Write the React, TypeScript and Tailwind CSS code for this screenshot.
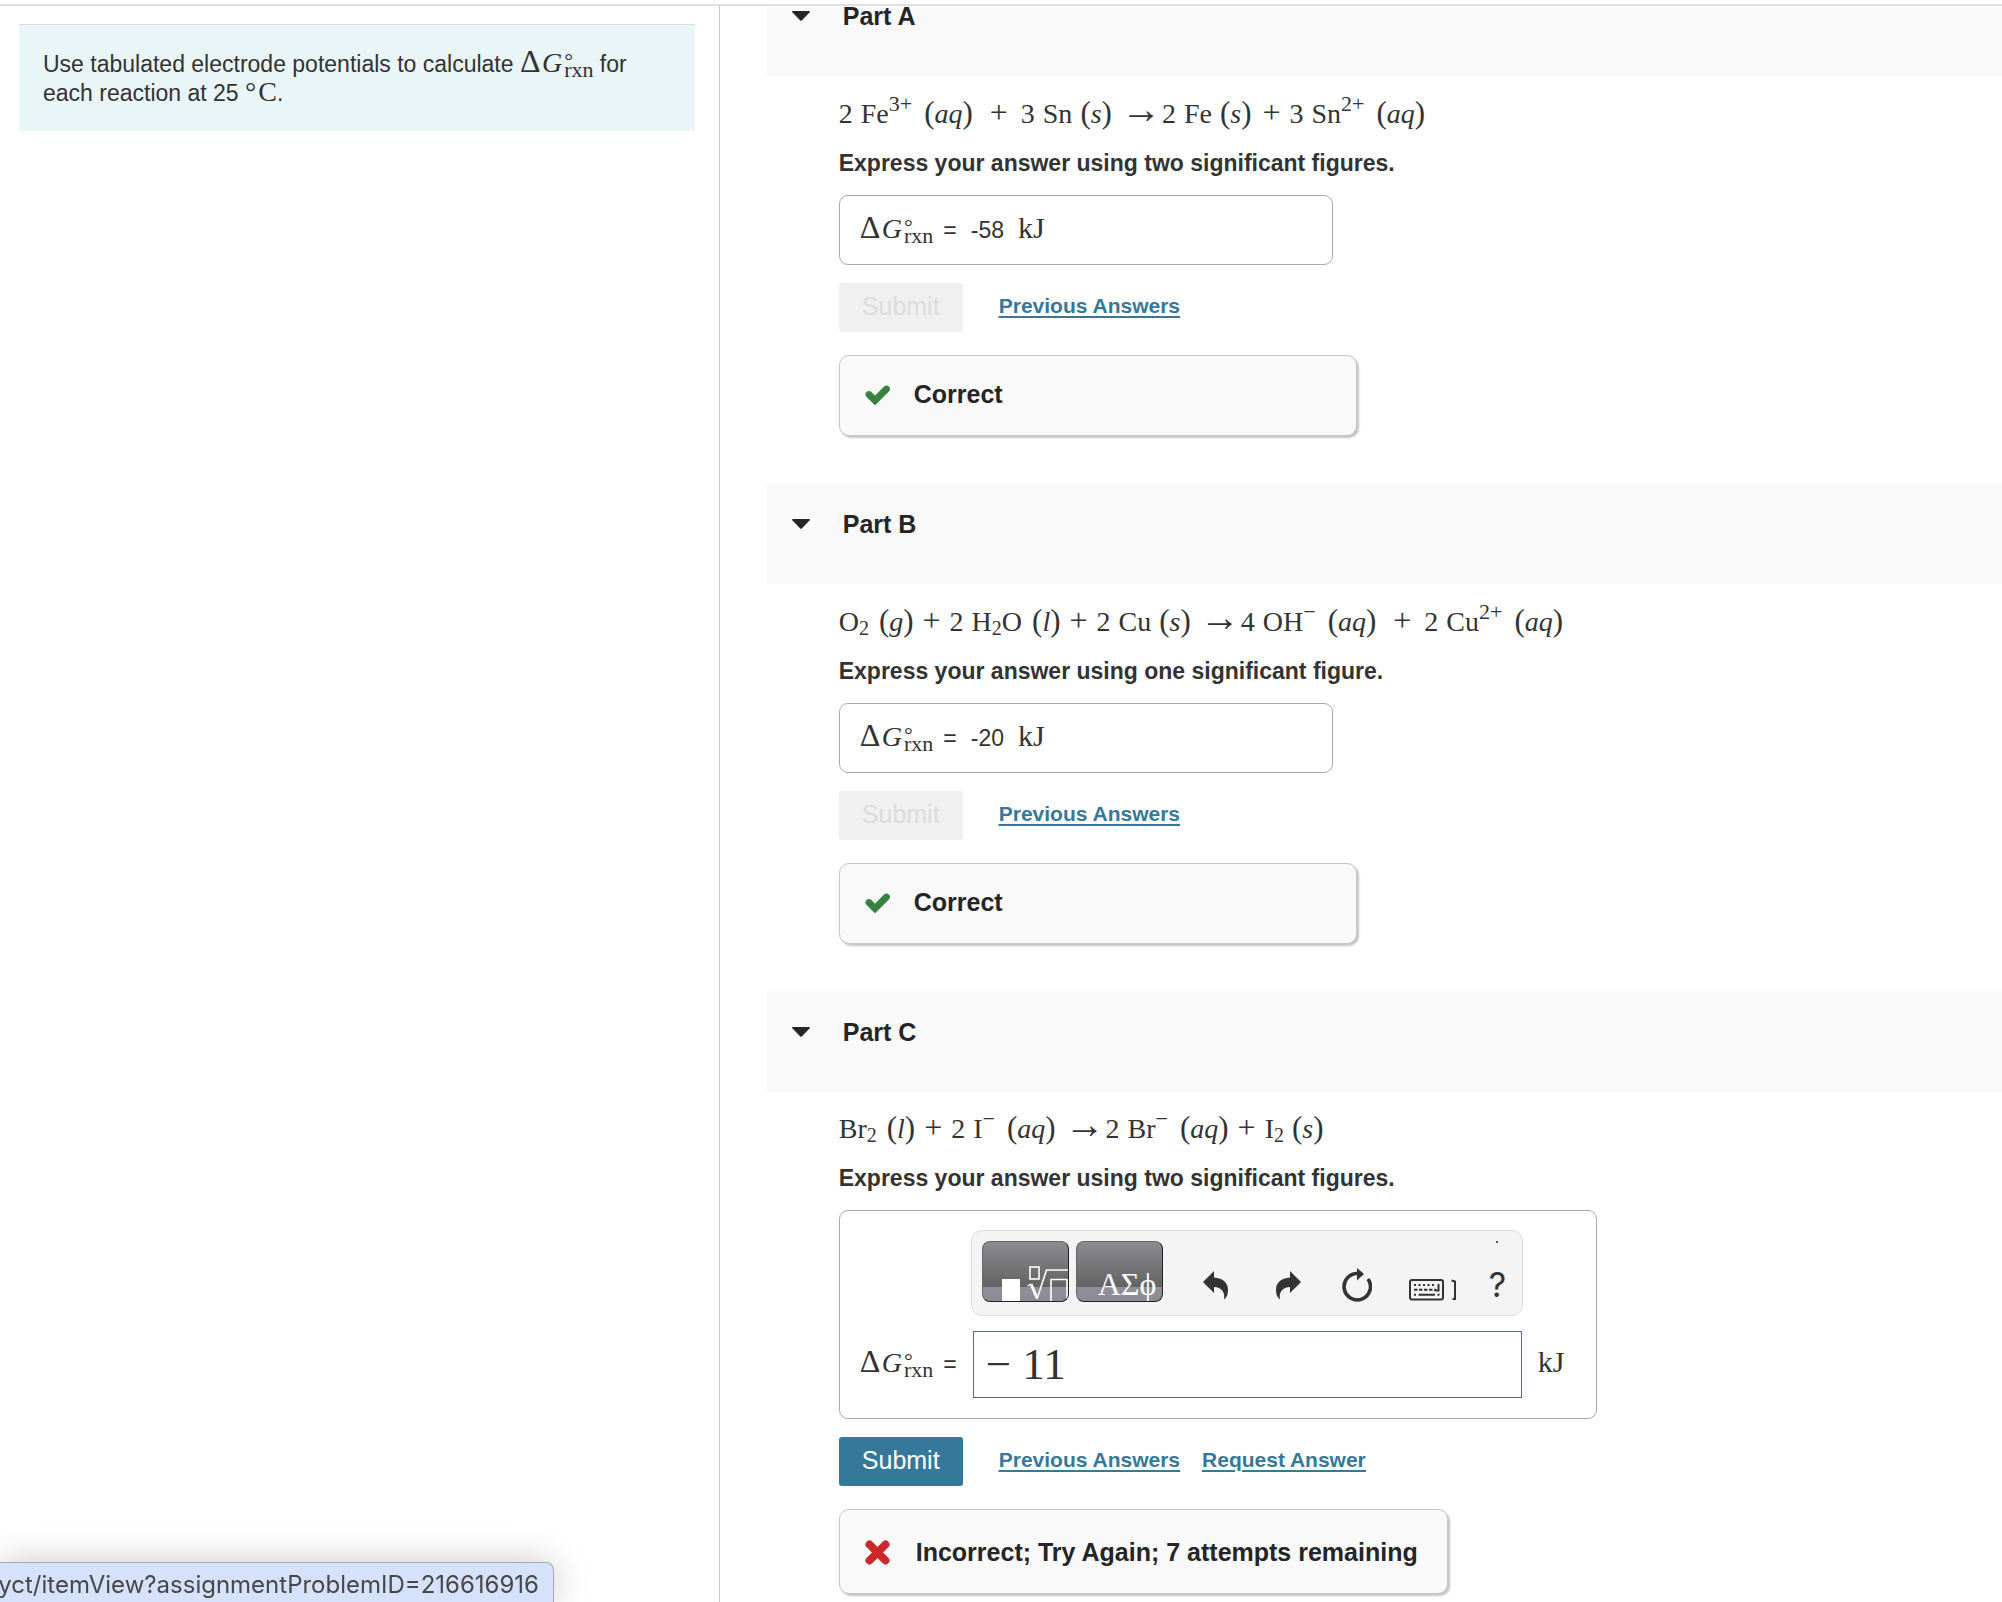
import { useState, type ReactNode } from 'react'

/*
  Electrochemistry problem: prompt on the left, parts A–C on the right.
  Formulas are plain serif text; scripts get a short line height so they
  never push the line they sit on.
*/

const SERIF = 'font-[Liberation_Serif,serif]'

// ---------- formula pieces ----------

function Sup({ children }: { children: ReactNode }) {
  return <span className="align-[12px] text-[22px] leading-[10px]">{children}</span>
}

function Sub({ children }: { children: ReactNode }) {
  return <span className="align-[-4px] text-[20px] leading-[10px]">{children}</span>
}

function Phase({ gap = 'ml-2', children }: { gap?: string; children: ReactNode }) {
  return (
    <span className={gap}>
      <span className="text-[31px] leading-5">(</span>
      <i>{children}</i>
      <span className="text-[31px] leading-5">)</span>
    </span>
  )
}

function Plus({ gap = 'ml-2' }: { gap?: string }) {
  return <span className={`${gap} flex w-5 justify-center text-[32px] leading-5`}>+</span>
}

function Arrow({ gap = 'ml-4' }: { gap?: string }) {
  return <span className={`${gap} flex w-[26px] justify-center text-[40px] leading-5`}>→</span>
}

function Equation({ children }: { children: ReactNode }) {
  return (
    <div className={`flex h-9 items-baseline whitespace-nowrap text-[28px] leading-9 ${SERIF}`}>
      {children}
    </div>
  )
}

function DeltaG() {
  return (
    <span className={`inline-flex items-baseline whitespace-nowrap text-[28px] leading-[20px] ${SERIF}`}>
      <span className="w-[22px] text-[32px]">Δ</span>
      <i>G</i>
      <span className="ml-0.5 inline-flex -translate-y-1 flex-col text-[22px] leading-[9px]">
        <span>°</span>
        <span>rxn</span>
      </span>
    </span>
  )
}

function Kilojoule() {
  return <span className={`text-[30px] leading-[20px] ${SERIF}`}>kJ</span>
}

// ---------- icons ----------

function TemplateIcon() {
  return (
    <svg viewBox="0 0 85 59" className="h-full w-full" fill="none" stroke="#fff" strokeWidth="1.6">
      <rect x="19" y="37" width="18" height="24" fill="#fff" stroke="none" />
      <rect x="47" y="25" width="9" height="12" />
      <path d="M44.5 44 L48 42" strokeWidth="1.4" />
      <path d="M48 42 L54 56" strokeWidth="3" />
      <path d="M54 57 L63.5 28 H86" />
      <path d="M68 60 V37.5 H84 V60" />
    </svg>
  )
}

function UndoIcon({ flip = false }: { flip?: boolean }) {
  return (
    <svg viewBox="0 0 25 29" className={flip ? 'h-[29px] w-[25px] -scale-x-100' : 'h-[29px] w-[25px]'} fill="#333">
      <path d="M0 11 L11 0 V6.5 C20 7 25 12 25 18.5 C25 23 24 26.5 21 28.5 C22.5 21 18 16 11 16 V22 Z" />
    </svg>
  )
}

function ResetIcon() {
  return (
    <svg viewBox="0 0 30 34" className="h-[34px] w-[30px]">
      <path d="M26 11 A13.2 13.2 0 1 1 16 5.5" fill="none" stroke="#333" strokeWidth="3.6" />
      <path d="M15 0 L22 6 L15 12.5 Z" fill="#333" />
    </svg>
  )
}

function KeyboardIcon() {
  return (
    <svg viewBox="0 0 48 22" className="h-[22px] w-[48px]" fill="none" stroke="#333" strokeWidth="2">
      <rect x="1" y="1" width="33" height="19.5" rx="2" />
      <path d="M5 6 H26" strokeDasharray="2 2.5" />
      <path d="M5 10.7 H27" strokeDasharray="3.5 1.5" />
      <path d="M29.5 5 V11.5 H26" />
      <path d="M5 15.7 H7 M9.5 15.7 H26 M28.5 15.7 H30.5" />
      <path d="M42.5 1.5 L46 2.5 V20 H43.5" />
    </svg>
  )
}

function CheckIcon() {
  return (
    <svg viewBox="0 0 25 20" className="h-5 w-[25px]">
      <path d="M4 9.5 L10 15.5 L21.5 4" fill="none" stroke="#388140" strokeWidth="6.8" strokeLinecap="round" />
    </svg>
  )
}

function CrossIcon() {
  return (
    <svg viewBox="0 0 25 25" className="size-[25px]">
      <path d="M4.5 4.5 L20.5 20.5 M20.5 4.5 L4.5 20.5" fill="none" stroke="#cd292c" strokeWidth="8" strokeLinecap="round" />
    </svg>
  )
}

// ---------- building blocks ----------

function Part({ name, children }: { name: string; children: ReactNode }) {
  const [open, setOpen] = useState(true)
  return (
    <section>
      <h2 className="bg-[#f9f9f9] pt-[23px] pr-6 pb-[42px] pl-[25px]">
        <button
          type="button"
          aria-expanded={open}
          onClick={() => setOpen(!open)}
          className="flex items-center gap-[33px] text-[25px] leading-9 font-bold text-[#252525]"
        >
          <svg viewBox="0 0 18 10" className="h-[10px] w-[18px]" fill="#252525">
            <path d="M1 0 H17 Q18.5 0 17.5 1.5 L10 9.3 Q9 10.3 8 9.3 L0.5 1.5 Q-0.5 0 1 0 Z" />
          </svg>
          Part {name}
        </button>
      </h2>
      {open && children}
    </section>
  )
}

function Instruction({ children }: { children: ReactNode }) {
  return <p className="mt-[17px] text-[23px] leading-[29px] font-bold">{children}</p>
}

function Given({ value }: { value: string }) {
  return (
    <div className="mt-[17px] flex h-[70px] w-[494px] items-baseline rounded-[9px] border border-[#aaa] pt-[17px] pl-5">
      <DeltaG />
      <span className="ml-2.5 text-[23px]">=</span>
      <span className="ml-3.5 text-[23px]">{value}</span>
      <span className="ml-3.5">
        <Kilojoule />
      </span>
    </div>
  )
}

function Actions({ disabled = false, canRequest = false }: { disabled?: boolean; canRequest?: boolean }) {
  return (
    <div className="mt-[18px] flex items-start">
      <button
        type="button"
        disabled={disabled}
        className={`h-[49px] w-[124px] rounded-[3px] pb-0.5 text-[25px] ${
          disabled ? 'bg-[#f0f0f0] text-[#dcdcdc]' : 'bg-[#367899] text-white'
        }`}
      >
        Submit
      </button>
      <div className="ml-9 flex gap-[22px] pt-2 text-[21px] leading-[30px] font-bold text-[#367899] underline decoration-2 underline-offset-[3px]">
        <a href="#previous">Previous Answers</a>
        {canRequest && <a href="#request">Request Answer</a>}
      </div>
    </div>
  )
}

function Verdict({ icon, className, children }: { icon: ReactNode; className: string; children: ReactNode }) {
  return (
    <div
      role="status"
      className={`mt-[23px] flex items-center rounded-[10px] border border-[#c6c6c6] bg-[#f9f9f9] pl-[25px] text-[25px] font-bold text-[#252525] shadow-[2px_2px_2px_#c4c4c4] ${className}`}
    >
      {icon}
      {children}
    </div>
  )
}

const PALETTE =
  'h-[61px] w-[87px] overflow-hidden rounded-[8px] border border-t-[#666] border-l-[#666] border-r-[#222] border-b-[#222] bg-[linear-gradient(#8c8b91_0%,#636363_76%,#918f99_76%,#8c8a96_100%)]'

function AnswerEditor() {
  const [value, setValue] = useState('− 11')
  return (
    <div className="mt-[17px] w-[758px] rounded-[9px] border border-[#aaa] pt-[19px] pb-5 pl-5">
      <div className="ml-[111px] flex h-[86px] w-[552px] rounded-[11px] border border-[#dcdcdc] bg-[#f4f4f4] pt-[10px] pl-[10px]">
        <button type="button" aria-label="Templates" className={PALETTE}>
          <TemplateIcon />
        </button>
        <button
          type="button"
          aria-label="Symbols"
          className={`ml-[7px] flex items-end pb-px pl-[21px] text-[32px] leading-[32px] text-white ${PALETTE} ${SERIF}`}
        >
          ΑΣϕ
        </button>
        <div className="flex items-start pt-[27px]">
          <button type="button" aria-label="Undo" className="ml-10 pt-[3px]">
            <UndoIcon />
          </button>
          <button type="button" aria-label="Redo" className="ml-12 pt-[3px]">
            <UndoIcon flip />
          </button>
          <button type="button" aria-label="Reset" className="ml-[41px]">
            <ResetIcon />
          </button>
          <button type="button" aria-label="Keyboard shortcuts" className="ml-[37px] pt-[11px]">
            <KeyboardIcon />
          </button>
          <button type="button" aria-label="Help" className="ml-8 font-[Inter,sans-serif] text-[34px] leading-[34px] text-[#333]">
            ?
          </button>
        </div>
        <span className="-ml-2.5 size-0.5 bg-[#555]" />
      </div>
      <div className="mt-[15px] flex items-start">
        <label htmlFor="part-c" className="flex w-[113px] items-baseline pt-[16px]">
          <DeltaG />
          <span className="ml-2.5 text-[23px]">=</span>
        </label>
        <input
          id="part-c"
          value={value}
          onChange={(e) => setValue(e.target.value)}
          className={`h-[67px] w-[549px] border border-[#367899] px-3 text-[45px] outline-none ${SERIF}`}
        />
        <span className="ml-4 pt-[21px]">
          <Kilojoule />
        </span>
      </div>
    </div>
  )
}

export default function App() {
  return (
    <div className="flex h-screen flex-col overflow-hidden bg-white pt-1 font-[Liberation_Sans,Arial,sans-serif] text-[#333]">
      <div className="flex min-h-0 flex-1 border-t-2 border-[#e0e0e0]">
        <aside className="w-[35.95%] shrink-0 border-r border-[#bfc8d8] pt-[18px] pr-6 pl-[19px]">
          <p className="border-t border-[#dcdcdc] bg-[#eaf5f8] pt-[25px] pb-[23px] pl-6 text-[23px] leading-[29px]">
            Use tabulated electrode potentials to calculate <DeltaG /> for
            <br />
            each reaction at 25{' '}
            <span className={`text-[28px] leading-[20px] ${SERIF}`}>
              °<span className="ml-0.5">C</span>
            </span>
            .
          </p>
        </aside>

        <main className="min-w-0 flex-1 overflow-hidden pl-[47px]">
          {/* scrolled a little way into part A */}
          <div className="-mt-[31px]">
            <Part name="A">
              <div className="pt-5 pb-[47px] pl-[72px]">
                <Equation>
                  <span>2</span>
                  <span className="ml-2">
                    Fe<Sup>3+</Sup>
                  </span>
                  <Phase gap="ml-3">aq</Phase>
                  <Plus gap="ml-4" />
                  <span className="ml-3">3</span>
                  <span className="ml-2">Sn</span>
                  <Phase>s</Phase>
                  <Arrow />
                  <span className="ml-2">2</span>
                  <span className="ml-2">Fe</span>
                  <Phase>s</Phase>
                  <Plus gap="ml-2.5" />
                  <span className="ml-2">3</span>
                  <span className="ml-2">
                    Sn<Sup>2+</Sup>
                  </span>
                  <Phase gap="ml-3">aq</Phase>
                </Equation>
                <Instruction>Express your answer using two significant figures.</Instruction>
                <Given value="-58" />
                <Actions disabled />
                <Verdict icon={<CheckIcon />} className="h-[81px] w-[518px] gap-6 pb-0.5">
                  Correct
                </Verdict>
              </div>
            </Part>

            <Part name="B">
              <div className="pt-5 pb-[47px] pl-[72px]">
                <Equation>
                  <span>
                    O<Sub>2</Sub>
                  </span>
                  <Phase gap="ml-2.5">g</Phase>
                  <Plus />
                  <span className="ml-2">2</span>
                  <span className="ml-2">
                    H<Sub>2</Sub>O
                  </span>
                  <Phase gap="ml-2.5">l</Phase>
                  <Plus />
                  <span className="ml-2">2</span>
                  <span className="ml-2">Cu</span>
                  <Phase>s</Phase>
                  <Arrow />
                  <span className="ml-2">4</span>
                  <span className="ml-2">
                    OH<Sup>−</Sup>
                  </span>
                  <Phase gap="ml-3">aq</Phase>
                  <Plus gap="ml-4" />
                  <span className="ml-3">2</span>
                  <span className="ml-2">
                    Cu<Sup>2+</Sup>
                  </span>
                  <Phase gap="ml-3">aq</Phase>
                </Equation>
                <Instruction>Express your answer using one significant figure.</Instruction>
                <Given value="-20" />
                <Actions disabled />
                <Verdict icon={<CheckIcon />} className="h-[81px] w-[518px] gap-6 pb-0.5">
                  Correct
                </Verdict>
              </div>
            </Part>

            <Part name="C">
              <div className="pt-[19px] pb-2 pl-[72px]">
                <Equation>
                  <span>
                    Br<Sub>2</Sub>
                  </span>
                  <Phase gap="ml-2.5">l</Phase>
                  <Plus />
                  <span className="ml-2">2</span>
                  <span className="ml-2">
                    I<Sup>−</Sup>
                  </span>
                  <Phase gap="ml-3">aq</Phase>
                  <Arrow />
                  <span className="ml-2">2</span>
                  <span className="ml-2">
                    Br<Sup>−</Sup>
                  </span>
                  <Phase gap="ml-3">aq</Phase>
                  <Plus />
                  <span className="ml-2">
                    I<Sub>2</Sub>
                  </span>
                  <Phase>s</Phase>
                </Equation>
                <Instruction>Express your answer using two significant figures.</Instruction>
                <AnswerEditor />
                <Actions canRequest />
                <Verdict icon={<CrossIcon />} className="h-[85px] w-[609px] gap-[26px] pt-0.5">
                  Incorrect; Try Again; 7 attempts remaining
                </Verdict>
              </div>
            </Part>
          </div>
        </main>
      </div>

      {/* browser link preview; the start of the URL runs off the left edge */}
      <div className="fixed bottom-0 left-0 flex h-10 w-[554px] justify-end rounded-tr-[8px] border-t border-r border-[#a9a9a9] bg-[#d6e2fb] pr-[14px] font-[Inter,sans-serif] text-[24px] leading-[43px] whitespace-nowrap text-[#474747] shadow-[0_0_36px_rgba(0,0,0,0.22)]">
        yct/itemView?assignmentProblemID=216616916
      </div>
    </div>
  )
}
